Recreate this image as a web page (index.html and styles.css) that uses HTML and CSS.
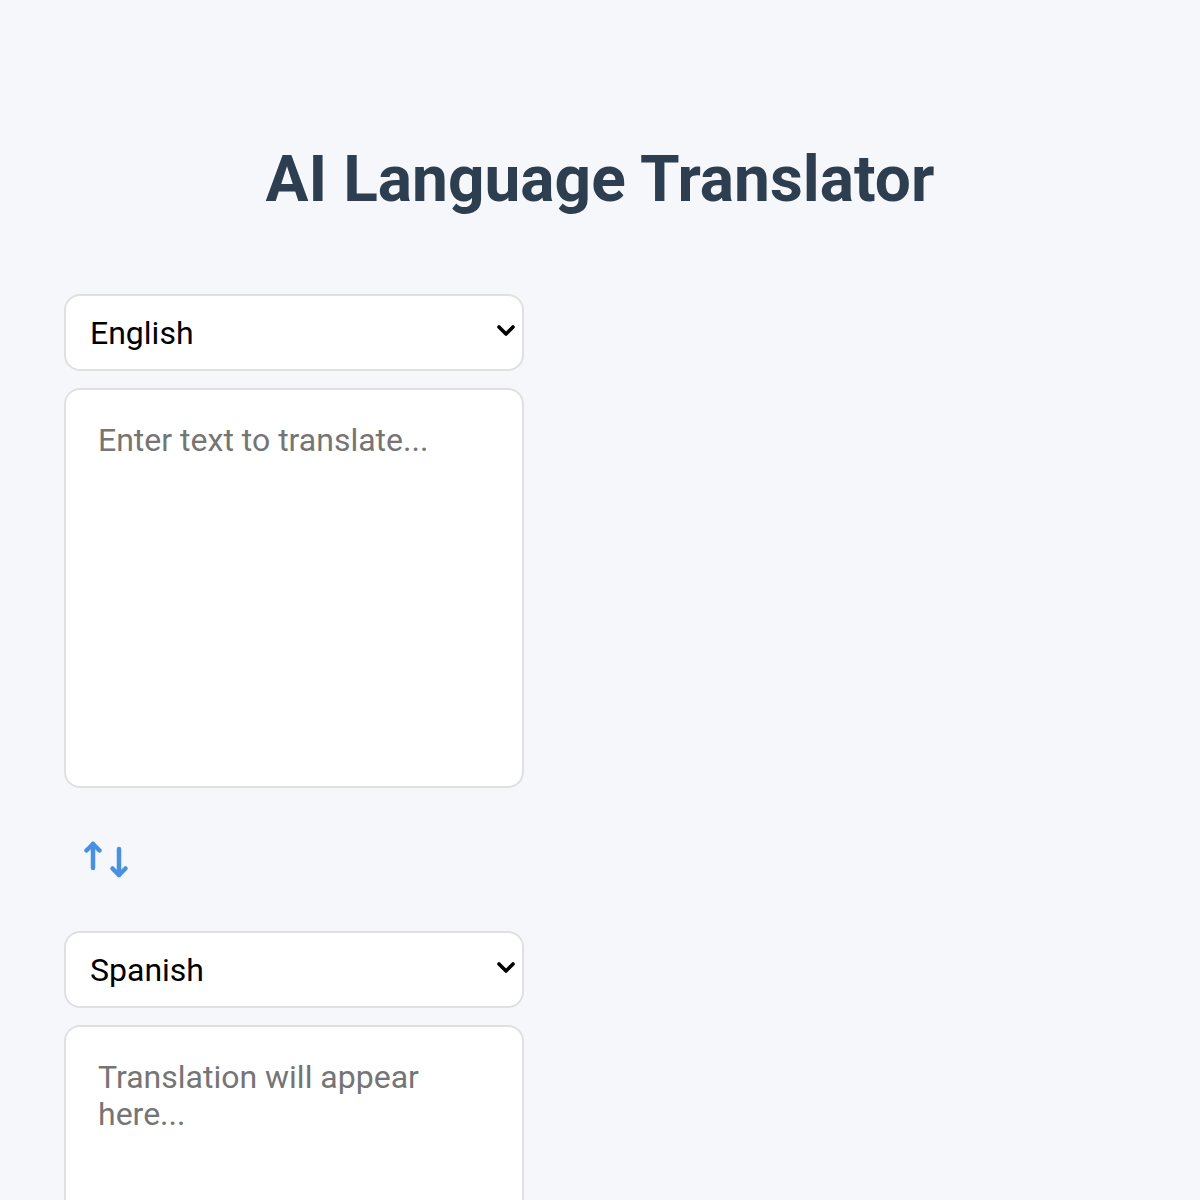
FILE: index.html
```html
<!DOCTYPE html>
<html lang="en">
<head>
    <meta charset="UTF-8">
    <meta name="viewport" content="width=device-width, initial-scale=1.0">
    <title>AI Language Translator</title>
    <link rel="stylesheet" href="styles.css">
</head>
<body>
    <div class="translator">
        <h1>AI Language Translator</h1>

        <div class="panel">
            <div class="select-wrap">
                <select id="source-lang">
                    <option value="en" selected>English</option>
                    <option value="es">Spanish</option>
                    <option value="fr">French</option>
                    <option value="de">German</option>
                </select>
                <svg class="chevron" width="20" height="14" viewBox="0 0 20 14">
                    <polyline points="3,3 10,10 17,3" fill="none" stroke="#000" stroke-width="3.6" stroke-linecap="round" stroke-linejoin="round"/>
                </svg>
            </div>
            <textarea id="source-text" placeholder="Enter text to translate..."></textarea>
        </div>

        <button class="swap-btn" id="swap-btn" title="Swap languages">
            <svg width="48" height="42" viewBox="0 0 48 42">
                <g fill="none" stroke="#4a90e2" stroke-width="4.5" stroke-linecap="round" stroke-linejoin="round">
                    <path d="M9 5 V29"/>
                    <path d="M2.5 11.5 L9 5 L15.5 11.5"/>
                    <path d="M35 10 V36"/>
                    <path d="M28.5 29.5 L35 36 L41.5 29.5"/>
                </g>
            </svg>
        </button>

        <div class="panel">
            <div class="select-wrap">
                <select id="target-lang">
                    <option value="en">English</option>
                    <option value="es" selected>Spanish</option>
                    <option value="fr">French</option>
                    <option value="de">German</option>
                </select>
                <svg class="chevron" width="20" height="14" viewBox="0 0 20 14">
                    <polyline points="3,3 10,10 17,3" fill="none" stroke="#000" stroke-width="3.6" stroke-linecap="round" stroke-linejoin="round"/>
                </svg>
            </div>
            <textarea id="target-text" placeholder="Translation will appear here..." readonly></textarea>
        </div>
    </div>

    <script>
        document.getElementById('swap-btn').addEventListener('click', function() {
            // Swap the selected languages
            const source = document.getElementById('source-lang');
            const target = document.getElementById('target-lang');
            const tmp = source.value;
            source.value = target.value;
            target.value = tmp;
        });
    </script>
</body>
</html>
```

FILE: styles.css
```css
body {
    font-family: Roboto, 'Liberation Sans', sans-serif;
    margin: 0;
    padding: 0 64px;
    background-color: #f5f7fa;
}
.translator {
    display: flex;
    flex-direction: column;
    align-items: flex-start;
}
h1 {
    align-self: stretch;
    color: #2c3e50;
    text-align: center;
    font-size: 64px;
    font-weight: 700;
    margin: 142px 0 77px;
}
.panel {
    width: 460px;
    display: flex;
    flex-direction: column;
    gap: 17px;
}
.select-wrap {
    position: relative;
}
select {
    appearance: none;
    -webkit-appearance: none;
    width: 100%;
    height: 77px;
    box-sizing: border-box;
    padding: 0 60px 0 24px;
    border: 2px solid #e0e0e0;
    border-radius: 16px;
    background-color: white;
    font-family: Roboto, 'Liberation Sans', sans-serif;
    font-size: 32px;
    color: #000;
}
.chevron {
    position: absolute;
    right: 8px;
    top: 30px;
    pointer-events: none;
}
textarea {
    width: 100%;
    height: 400px;
    box-sizing: border-box;
    padding: 32px;
    border: 2px solid #e0e0e0;
    border-radius: 16px;
    background-color: white;
    font-family: Roboto, 'Liberation Sans', sans-serif;
    font-size: 32px;
    line-height: 37px;
    resize: none;
}
textarea::placeholder {
    color: #757575;
}
.swap-btn {
    background: none;
    border: none;
    padding: 0;
    margin: 51px 0 50px 20px;
    cursor: pointer;
    display: flex;
}
```
